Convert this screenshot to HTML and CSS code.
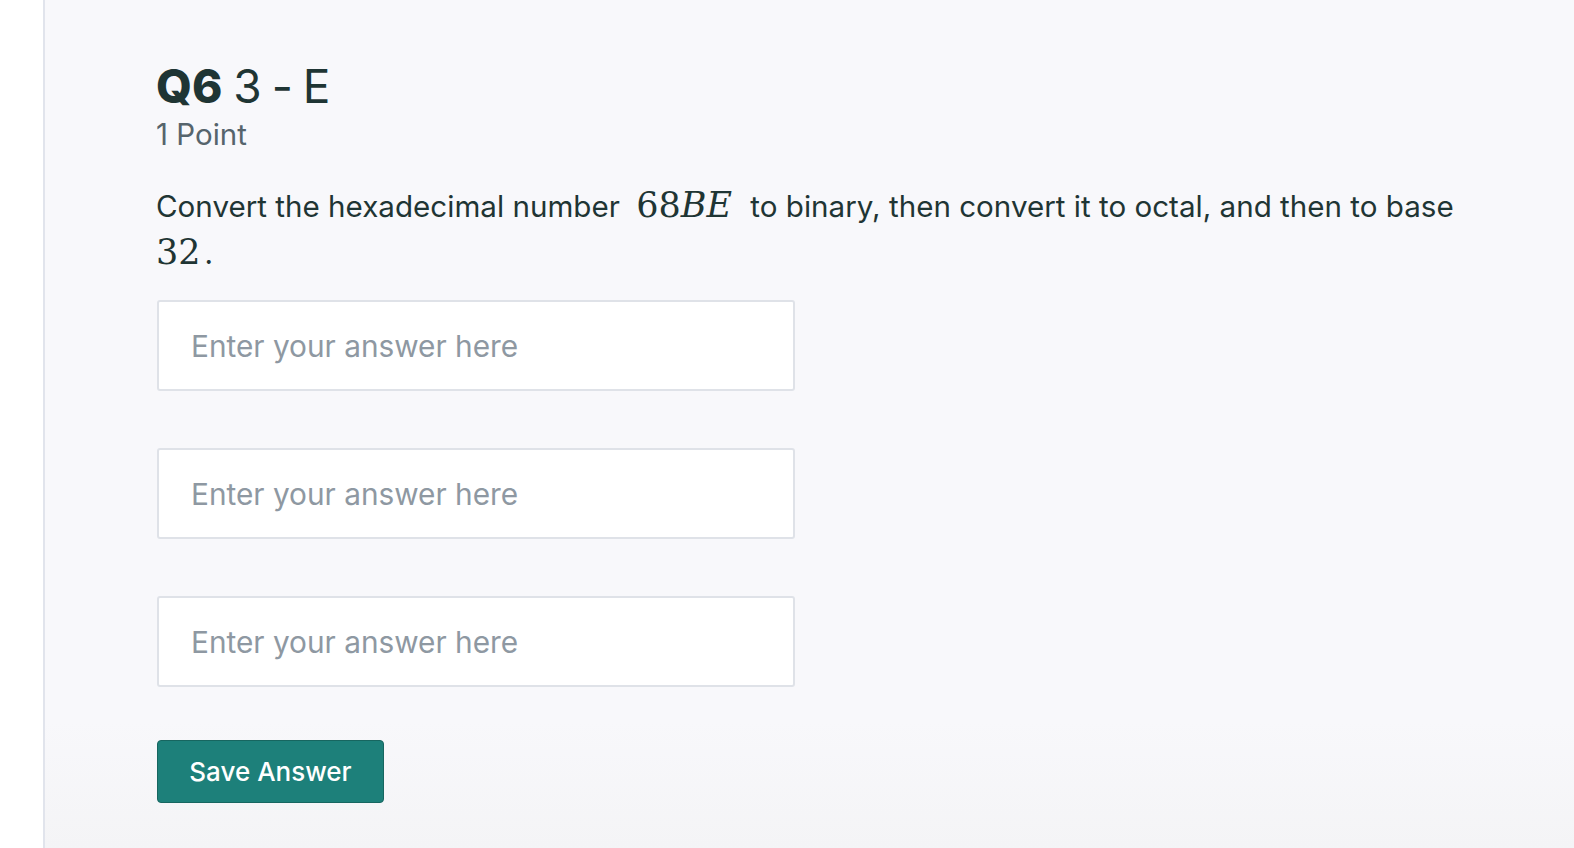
FILE: index.html
```html
<!DOCTYPE html>
<html lang="en">
<head>
  <meta charset="UTF-8" />
  <title>Q6 3 - E</title>
  <link rel="stylesheet" href="styles.css">
</head>
<body>
  <div class="side-strip"></div>
  <main class="question">
    <div class="question-head">
      <h1 class="question-title"><b>Q6</b> <span class="question-name">3 - E</span></h1>
      <div class="question-points">1 Point</div>
    </div>
    <p class="question-text">
      Convert the hexadecimal number <span class="math">68<i>BE</i></span> to binary, then convert it to octal, and then to base <span class="math math-end">32</span>.
    </p>
    <div class="answers">
      <input class="answer-input" type="text" placeholder="Enter your answer here">
      <input class="answer-input" type="text" placeholder="Enter your answer here">
      <input class="answer-input" type="text" placeholder="Enter your answer here">
    </div>
    <button class="save-button">Save Answer</button>
  </main>
</body>
</html>
```

FILE: styles.css
```css
html, body {
  margin: 0;
  padding: 0;
  height: 100%;
}

body {
  display: flex;
  background-color: #ffffff;
  color: #1f3534;
  font-family: "Inter", "Open Sans", sans-serif;
  overflow: hidden;
}

.side-strip {
  width: 43px;
  flex-shrink: 0;
  background-color: #ffffff;
  border-right: 2px solid #e1e4ec;
}

.question {
  flex: 1;
  background: linear-gradient(#f8f8fb 85%, #f4f4f6);
  padding: 60px 0 0 111px;
  box-sizing: border-box;
}

.question-title {
  margin: 0;
  font-size: 46px;
  font-weight: 400;
  line-height: 52px;
  color: #1f3534;
}
.question-title b { font-weight: 800; }
.question-name { letter-spacing: -1.5px; margin-left: -2px; }

.question-points {
  margin-top: 4px;
  font-size: 29.5px;
  line-height: 36px;
  color: #56646c;
}

.question-text {
  margin: 30px 0 0;
  width: 1320px;
  font-size: 29.6px;
  line-height: 46px;
}

.math {
  font-family: "DejaVu Serif", "Liberation Serif", serif;
  font-size: 35px;
  margin: 0 10px 0 8px;
}
.math i { font-style: italic; }
.math-end { margin: 0 4px 0 0; }

.answers {
  display: flex;
  flex-direction: column;
  gap: 57px;
  margin-top: 24px;
}

.answer-input {
  width: 638px;
  height: 91px;
  margin-left: 1px;
  box-sizing: border-box;
  border: 2px solid #dfe2e8;
  border-radius: 3px;
  background-color: #ffffff;
  padding: 0 32px;
  font-family: "Inter", "Open Sans", sans-serif;
  font-size: 29.8px;
  color: #1f3534;
}
.answer-input::placeholder { color: #8e98a2; }

.save-button {
  margin-top: 53px;
  margin-left: 1px;
  width: 227px;
  height: 63px;
  background-color: #1d807a;
  border: 1px solid #176660;
  border-radius: 4px;
  color: #ffffff;
  font-family: "Inter", "Open Sans", sans-serif;
  font-size: 26px;
  font-weight: 500;
  cursor: pointer;
}
```
